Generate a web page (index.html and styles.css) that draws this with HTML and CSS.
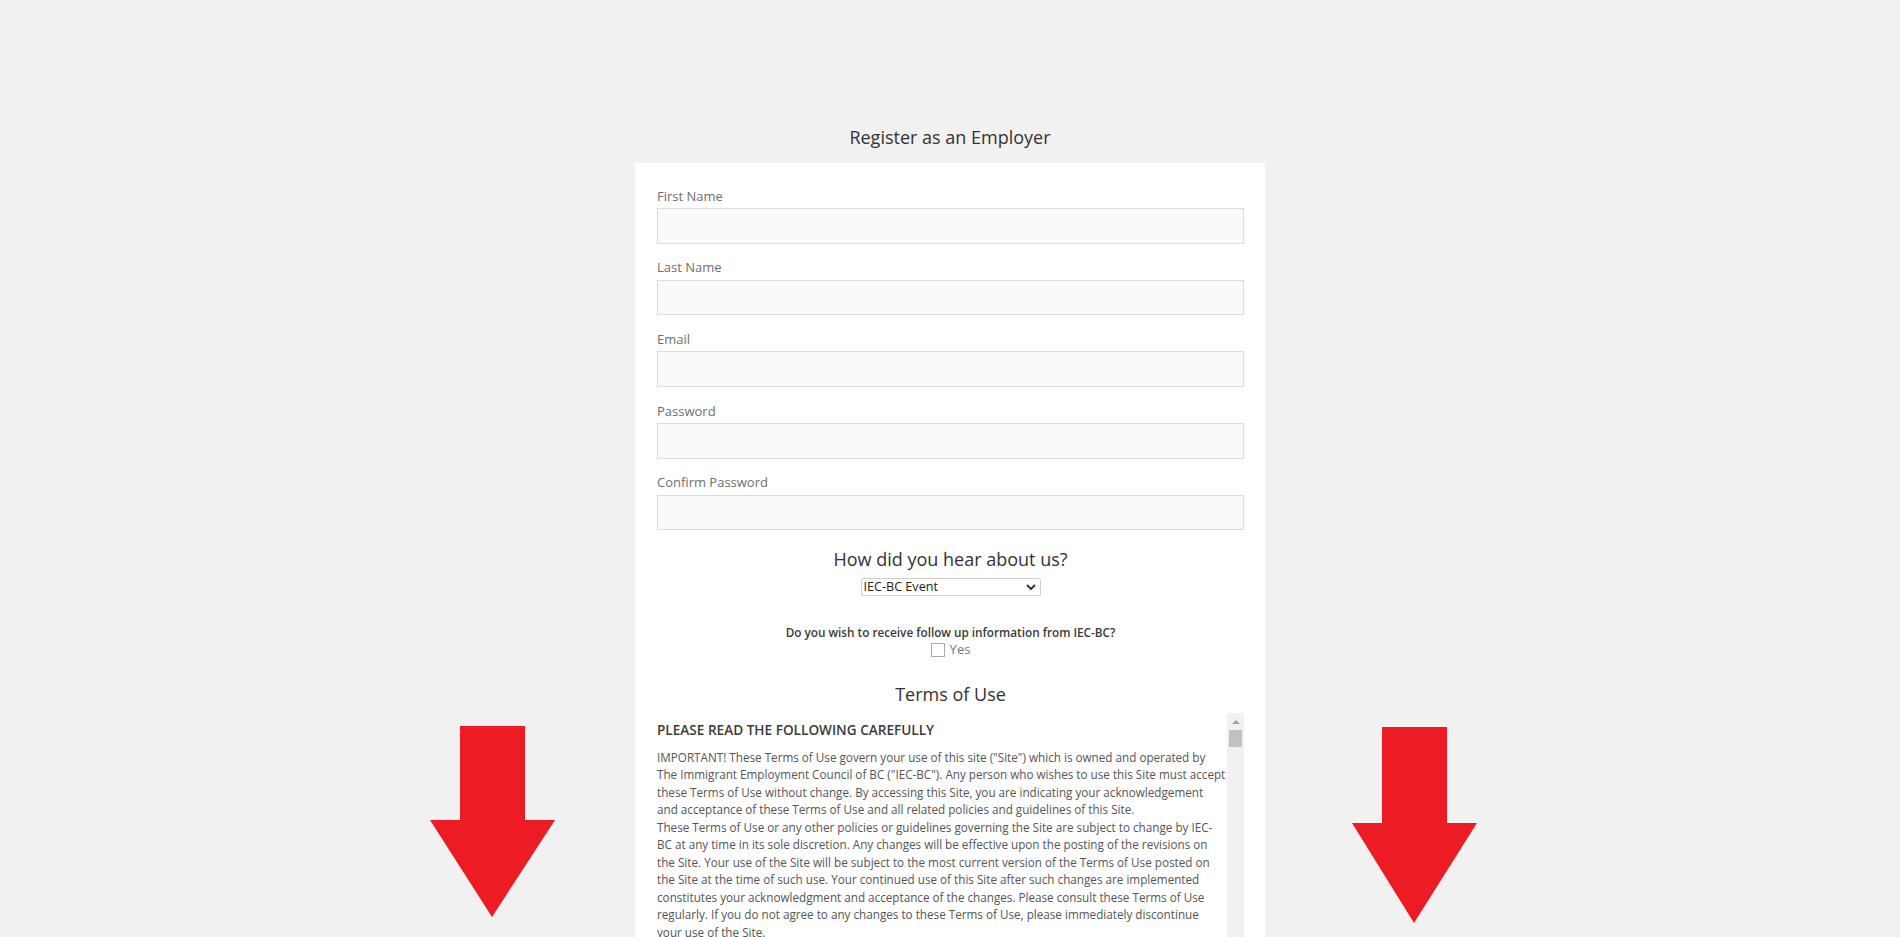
FILE: index.html
```html
<!DOCTYPE html>
<html lang="en">
<head>
<meta charset="utf-8">
<title>Register as an Employer</title>
<link rel="stylesheet" href="styles.css">
</head>
<body>
<div class="page">
  <h1 class="page-title">Register as an Employer</h1>
  <form class="card">
    <div class="field">
      <label class="field-label" for="fn">First Name</label>
      <input class="field-input" id="fn" type="text">
    </div>
    <div class="field">
      <label class="field-label" for="ln">Last Name</label>
      <input class="field-input" id="ln" type="text">
    </div>
    <div class="field">
      <label class="field-label" for="em">Email</label>
      <input class="field-input" id="em" type="email">
    </div>
    <div class="field">
      <label class="field-label" for="pw">Password</label>
      <input class="field-input" id="pw" type="password">
    </div>
    <div class="field">
      <label class="field-label" for="cpw">Confirm Password</label>
      <input class="field-input" id="cpw" type="password">
    </div>

    <h2 class="section-title hear-title">How did you hear about us?</h2>
    <div class="select-row">
      <span class="select-wrap">
        <select class="select">
          <option>IEC-BC Event</option>
          <option>Website</option>
          <option>Referral</option>
          <option>Other</option>
        </select>
        <svg class="select-chevron" width="10" height="6" viewBox="0 0 10 6"><path d="M1 1 L5 5 L9 1" fill="none" stroke="#333" stroke-width="2"/></svg>
      </span>
    </div>

    <p class="question">Do you wish to receive follow up information from IEC-BC?</p>
    <div class="check-row">
      <input class="check" type="checkbox" id="yes">
      <label class="check-label" for="yes">Yes</label>
    </div>

    <h2 class="section-title terms-title">Terms of Use</h2>
    <div class="terms-box">
      <div class="terms-text">
        <h3 class="terms-heading">PLEASE READ THE FOLLOWING CAREFULLY</h3>
        <p class="terms-p">IMPORTANT! These Terms of Use govern your use of this site ("Site") which is owned and operated by<br>The Immigrant Employment Council of BC ("IEC-BC"). Any person who wishes to use this Site must accept<br>these Terms of Use without change. By accessing this Site, you are indicating your acknowledgement<br>and acceptance of these Terms of Use and all related policies and guidelines of this Site.</p>
        <p class="terms-p">These Terms of Use or any other policies or guidelines governing the Site are subject to change by IEC-<br>BC at any time in its sole discretion. Any changes will be effective upon the posting of the revisions on<br>the Site. Your use of the Site will be subject to the most current version of the Terms of Use posted on<br>the Site at the time of such use. Your continued use of this Site after such changes are implemented<br>constitutes your acknowledgment and acceptance of the changes. Please consult these Terms of Use<br>regularly. If you do not agree to any changes to these Terms of Use, please immediately discontinue<br>your use of the Site.</p>
        <p class="terms-p">All content on this Site is provided for information purposes only.</p>
      </div>
      <div class="scrollbar">
        <div class="scroll-btn"><span class="scroll-arrow"></span></div>
        <div class="scroll-thumb"></div>
      </div>
    </div>
    <div class="submit-row">
      <button class="submit" type="button">Register</button>
    </div>
  </form>
</div>

<svg class="arrow arrow-left" width="125" height="192" viewBox="0 0 125 192"><polygon points="30,0 95,0 95,94 125,94 62,191 0,94 30,94" fill="#ed1c24"/></svg>
<svg class="arrow arrow-right" width="125" height="197" viewBox="0 0 125 197"><polygon points="30,0 95,0 95,96 125,96 62,196 0,96 30,96" fill="#ed1c24"/></svg>
</body>
</html>
```

FILE: styles.css
```css
html {
  scrollbar-width: none;
}
html::-webkit-scrollbar {
  display: none;
}
body {
  margin: 0;
  background: #f1f1f1;
  font-family: "Open Sans", "Liberation Sans", Arial, sans-serif;
  color: #333;
  position: relative;
}
.page {
  padding-top: 125px;
  padding-bottom: 40px;
}
.page-title {
  margin: 0 0 14px;
  font-size: 18px;
  line-height: 24px;
  font-weight: 400;
  text-align: center;
  color: #333;
}
.card {
  display: block;
  width: 630px;
  box-sizing: border-box;
  margin: 0 auto;
  background: #fff;
  padding: 22.5px 21px 30px 22px;
}
.field {
  margin-bottom: 13.7px;
}
.field-label {
  display: block;
  font-size: 13px;
  line-height: 20px;
  color: #6e6e6e;
  margin-bottom: 2.5px;
}
.field-input {
  display: block;
  width: 100%;
  height: 35.5px;
  box-sizing: border-box;
  border: 1px solid #dcdcdc;
  background: #fafafa;
  margin: 0;
  padding: 0 8px;
  font-family: inherit;
  font-size: 13px;
}
.section-title {
  font-size: 18px;
  line-height: 24px;
  font-weight: 400;
  text-align: center;
  color: #333;
}
.hear-title {
  margin: 17.2px 0 6.3px;
}
.select-row {
  display: flex;
  justify-content: center;
}
.select-wrap {
  position: relative;
  display: block;
  width: 180px;
  height: 18.5px;
}
.select {
  appearance: none;
  -webkit-appearance: none;
  display: block;
  width: 100%;
  height: 100%;
  box-sizing: border-box;
  margin: 0;
  border: 1px solid #cfcfcf;
  border-radius: 2px;
  background: #fff;
  padding: 0 0 0 2px;
  font-family: "Open Sans", "Liberation Sans", Arial, sans-serif;
  font-size: 12.6px;
  line-height: 16px;
  color: #222;
}
.select-chevron {
  position: absolute;
  right: 5px;
  top: 6px;
  pointer-events: none;
}
.question {
  margin: 27.4px 0 0;
  font-size: 11.75px;
  line-height: 17px;
  font-weight: 600;
  text-align: center;
  color: #3a3a3a;
}
.check-row {
  display: flex;
  justify-content: center;
  align-items: center;
  height: 17px;
  gap: 5px;
}
.check {
  appearance: none;
  -webkit-appearance: none;
  width: 14px;
  height: 14px;
  margin: 2px 0 0;
  box-sizing: border-box;
  border: 1px solid #aaa;
  background: #fff;
}
.check:checked {
  background: #4a90e2;
}
.check-label {
  font-size: 13px;
  line-height: 17px;
  color: #777;
}
.terms-title {
  margin: 24.1px 0 7px;
}
.terms-box {
  display: flex;
  height: 260px;
  background: #fff;
}
.terms-text {
  flex: 1;
  min-width: 0;
  overflow: hidden;
  padding-top: 7.7px;
  white-space: nowrap;
}
.terms-heading {
  margin: 0 0 8.25px;
  font-size: 13.6px;
  line-height: 20px;
  font-weight: 600;
  color: #3a3a3a;
}
.terms-p {
  margin: 0;
  font-size: 11.7px;
  line-height: 17.5px;
  color: #555;
}
.scrollbar {
  width: 17px;
  flex: none;
  background: #f1f1f1;
  display: flex;
  flex-direction: column;
  align-items: center;
}
.scroll-btn {
  height: 17px;
  width: 17px;
  display: flex;
  align-items: center;
  justify-content: center;
}
.scroll-arrow {
  width: 0;
  height: 0;
  border-left: 4px solid transparent;
  border-right: 4px solid transparent;
  border-bottom: 4px solid #a3a3a3;
  margin-top: 1px;
}
.scroll-thumb {
  width: 13px;
  height: 17px;
  background: #c1c1c1;
}
.submit-row {
  display: flex;
  justify-content: center;
  margin-top: 20px;
}
.submit {
  font-family: inherit;
  font-size: 14px;
  padding: 8px 24px;
  border: 0;
  background: #c8102e;
  color: #fff;
}
.arrow {
  position: absolute;
  display: block;
}
.arrow-left {
  left: 430px;
  top: 726px;
}
.arrow-right {
  left: 1352px;
  top: 727px;
}
```
